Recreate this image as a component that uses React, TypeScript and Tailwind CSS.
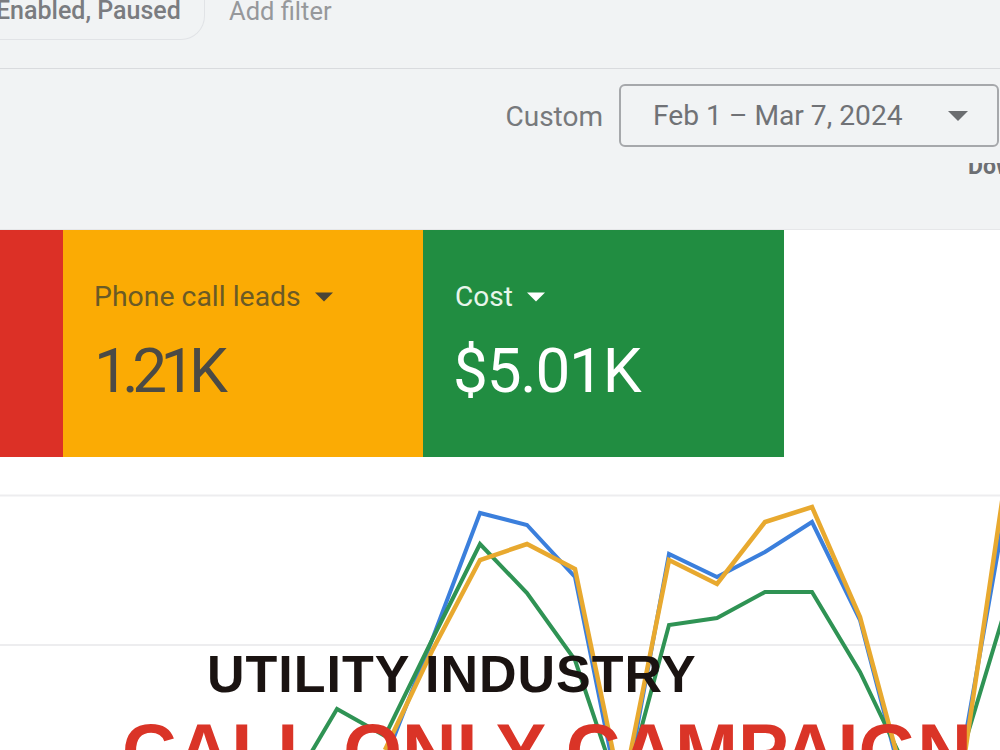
const BLUE = '385,760 432,640 480,513 527,525 575,577 622,810 669,554 717,577 765,552 812,522 860,620 907,800 955,795 1003,523';
const ORANGE = '385,750 432,651 480,560 527,544 575,569 622,795 669,560 717,584 765,522 812,507 860,617 907,792 955,821 1003,495';
const GREEN = '289,790 337,709 385,736 432,640 480,544 527,593 575,660 622,800 669,625 717,618 765,592 812,592 860,672 907,770 955,776 1003,617';

function Caret({ className }: { className: string }) {
    return (
        <svg viewBox="0 0 20 10" className={className}>
            <path d="M0 0h20L10 10z" fill="currentColor" />
        </svg>
    );
}

function Chart() {
    return (
        <svg viewBox="0 0 1000 293" className="w-[1000px] h-[293px] block">
            <g transform="translate(0,-457)">
                <line x1="0" y1="495.5" x2="1000" y2="495.5" stroke="#ededef" strokeWidth="2" />
                <line x1="0" y1="645" x2="1000" y2="645" stroke="#ededef" strokeWidth="2" />
                <polyline points={BLUE} fill="none" stroke="#3b7fdc" strokeWidth="4" />
                <polyline points={GREEN} fill="none" stroke="#2f9354" strokeWidth="4" />
                <polyline points={ORANGE} fill="none" stroke="#e8a92f" strokeWidth="4.5" />
            </g>
        </svg>
    );
}

export default function App() {
    return (
        <div className="relative w-[1000px] h-[750px] overflow-hidden bg-white flex flex-col font-['Roboto',sans-serif]">
            {/* filter bar */}
            <div className="h-[69px] shrink-0 bg-[#f1f3f4] border-b border-[#d9dbde] flex items-start">
                <div className="h-[41px] w-[245px] -mt-px ml-[-40px] pl-[36px] rounded-br-[24px] border-r border-b border-[#e1e3e6] flex items-end pb-[13px] text-[25px] leading-[30px] font-medium text-[#7a7c80] whitespace-nowrap">
                    Enabled, Paused
                </div>
                <div className="ml-[24px] h-[30px] flex items-end text-[25.5px] leading-[30px] pb-[4px] text-[#96989b]">Add filter</div>
            </div>

            {/* date range */}
            <div className="h-[161px] shrink-0 bg-[#f1f3f4] border-b border-[#e6e7e9] flex flex-col items-end">
                <div className="mt-[15px] flex items-center">
                    <span className="text-[28px] leading-[32px] mt-[2px] text-[#77797c]">Custom</span>
                    <div className="ml-[16px] w-[380px] h-[63px] mr-[1px] rounded-[6px] border-2 border-[#a6a8ab] flex items-center justify-between pl-[32px] pr-[29px]">
                        <span className="text-[28.2px] leading-[32px] mt-[1px] text-[#707276] whitespace-nowrap">Feb 1 – Mar 7, 2024</span>
                        <Caret className="w-[20px] h-[10px] text-[#6b6d70]" />
                    </div>
                </div>
                <div className="mt-[16px] h-[14px] w-[32px] overflow-hidden flex items-end">
                    <span className="text-[23px] leading-[21px] font-bold text-[#6d6f73]">Download</span>
                </div>
            </div>

            {/* metric tiles */}
            <div className="h-[227px] shrink-0 flex">
                <div className="w-[63px] bg-[#dc3026]" />
                <div className="w-[360px] bg-[#fbab04] pl-[31px] pt-[50px] text-[#4b4a45]">
                    <div className="flex items-center gap-[14px] h-[34px]">
                        <span className="text-[28.4px] leading-[34px] text-[#6a5a26] whitespace-nowrap">Phone call leads</span>
                        <Caret className="w-[18px] h-[10px] text-[#4a4536]" />
                    </div>
                    <div className="mt-[22px] text-[62px] leading-[70px] tracking-[-6.5px]">1.21K</div>
                </div>
                <div className="w-[361px] bg-[#218d41] pl-[32px] pt-[50px] text-white">
                    <div className="flex items-center gap-[14px] h-[34px]">
                        <span className="text-[28px] leading-[34px] text-[#e8f5ea]">Cost</span>
                        <Caret className="w-[18px] h-[10px] text-white" />
                    </div>
                    <div className="mt-[22px] ml-[-2px] text-[62px] leading-[70px] tracking-[-1.2px]">$5.01K</div>
                </div>
            </div>

            <Chart />

            {/* title over the chart */}
            <div className="absolute left-[207px] top-[644px] text-[52px] leading-[60px] tracking-[1px] font-bold text-[#1a1311] whitespace-nowrap font-['Liberation_Sans',sans-serif]">
                UTILITY INDUSTRY
            </div>
            <div className="absolute left-[122px] top-[709px] text-[75.6px] leading-[84px] font-bold text-[#da3427] whitespace-nowrap font-['Liberation_Sans',sans-serif]">
                CALL ONLY CAMPAIGN
            </div>
        </div>
    );
}
